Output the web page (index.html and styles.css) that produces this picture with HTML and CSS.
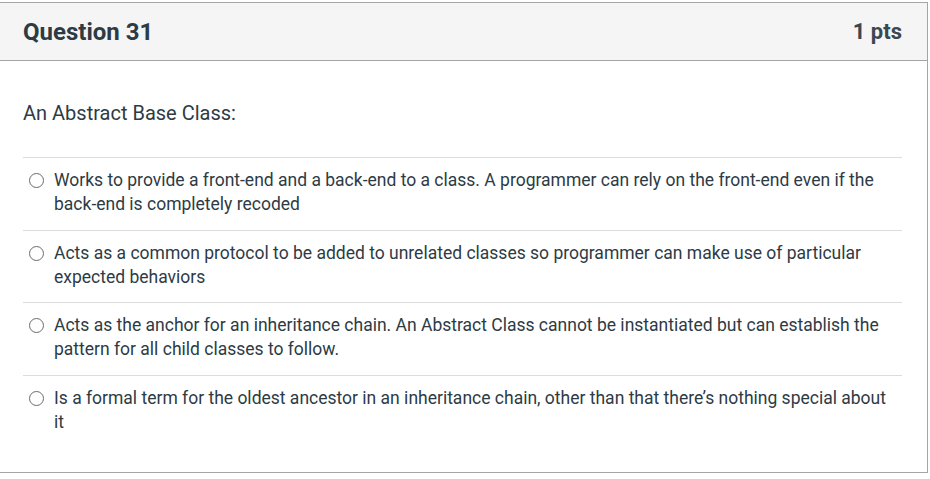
FILE: index.html
```html
<!DOCTYPE html>
<html>
<head>
<meta charset="utf-8">
<link rel="stylesheet" href="styles.css">
</head>
<body>
<div class="question">
  <div class="header">
    <h2 class="title">Question 31</h2>
    <div class="pts">1 pts</div>
  </div>
  <div class="content">
    <p class="prompt">An Abstract Base Class:</p>
    <div class="answers">
      <label class="answer"><span class="radio"></span><span class="text">Works to provide a front-end and a back-end to a class. A programmer can rely on the front-end even if the back-end is completely recoded</span></label>
      <label class="answer"><span class="radio"></span><span class="text">Acts as a common protocol to be added to unrelated classes so programmer can make use of particular expected behaviors</span></label>
      <label class="answer"><span class="radio"></span><span class="text">Acts as the anchor for an inheritance chain. An Abstract Class cannot be instantiated but can establish the pattern for all child classes to follow.</span></label>
      <label class="answer"><span class="radio"></span><span class="text">Is a formal term for the oldest ancestor in an inheritance chain, other than that there’s nothing special about it</span></label>
    </div>
  </div>
</div>
</body>
</html>
```
FILE: styles.css
```css
html, body {
  margin: 0;
  padding: 0;
  background: #fff;
}
body {
  font-family: Roboto, "Liberation Sans", sans-serif;
  color: #2d3b45;
}
.question {
  margin: 2px 0 0 -1px;
  width: 929px;
  height: 471px;
  border: 1px solid #a5a5a5;
  box-sizing: border-box;
  display: flex;
  flex-direction: column;
}
.header {
  height: 58px;
  box-sizing: border-box;
  background: #f5f5f5;
  border-bottom: 1px solid #a5a5a5;
  display: flex;
  align-items: center;
  justify-content: space-between;
  padding: 0 25px 0 23px;
}
.title {
  margin: 0;
  font-size: 24px;
  font-weight: 700;
  color: #2d3b45;
}
.pts {
  font-size: 22px;
  font-weight: 700;
  color: #3b4751;
}
.content {
  padding: 0 25px 0 23px;
}
.prompt {
  margin: 40px 0 0;
  font-size: 20px;
  line-height: 24px;
  height: 56px;
}
.answers {
  display: flex;
  flex-direction: column;
}
.answer {
  display: flex;
  align-items: flex-start;
  border-top: 1px solid #dcdcdc;
  padding: 10px 0 13.6px 6px;
  font-size: 17.5px;
  line-height: 24px;
}
.radio {
  flex: none;
  width: 15px;
  height: 15px;
  border: 1px solid #6b6b6b;
  border-radius: 50%;
  box-sizing: border-box;
  margin: 5px 10px 0 0;
}
.text {
  flex: 1;
  padding-right: 8px;
}
```
